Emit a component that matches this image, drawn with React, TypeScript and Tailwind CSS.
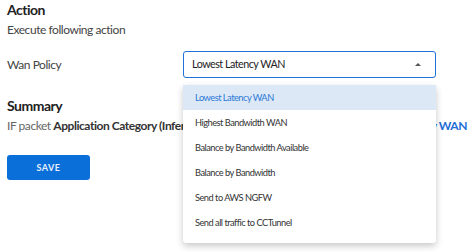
const options = [
  'Lowest Latency WAN',
  'Highest Bandwidth WAN',
  'Balance by Bandwidth Available',
  'Balance by Bandwidth',
  'Send to AWS NGFW',
  'Send all traffic to CCTunnel',
];

export default function App() {
  const selected = options[0];

  return (
    <div className="w-[474px] h-[252px] overflow-hidden bg-white text-[#444] font-['Lato',sans-serif] px-[7px]">
      {/* Action */}
      <h2 className="text-[14px] font-bold text-[#222] leading-[20px] tracking-[-0.5px]">Action</h2>
      <p className="text-[12px] leading-[18px] mt-[1px] tracking-[-0.45px]">Execute following action</p>

      <div className="flex items-center mt-[12px] h-[27px]">
        <span className="w-[176px] text-[12px] tracking-[-0.45px]">Wan Policy</span>
        <div className="relative w-[253px]">
          <div className="flex items-center justify-between h-[27px] border border-[#1f73d8] rounded-[3px] pl-[8px] pr-[14px]">
            <span className="text-[10.75px] tracking-[-0.5px] text-[#222]">{selected}</span>
            <svg width="6" height="3" viewBox="0 0 6 3" className="fill-[#555]">
              <path d="M0 3 L3 0 L6 3 Z" />
            </svg>
          </div>

          {/* Menu */}
          <ul className="absolute left-0 top-[34px] z-10 w-[253px] pb-[8px] bg-white rounded-[3px] shadow-[0_3px_7px_rgba(0,0,0,0.22)] text-[9.25px] tracking-[-0.5px]">
            {options.map((opt) => (
              <li
                key={opt}
                className={`h-[25px] flex items-center px-[12px] ${
                  opt === selected ? 'bg-[#dde8f7] text-[#2a78d6]' : 'text-[#333]'
                }`}
              >
                {opt}
              </li>
            ))}
          </ul>
        </div>
      </div>

      {/* Summary */}
      <h2 className="text-[14px] font-bold text-[#222] leading-[20px] mt-[18px] tracking-[-0.5px]">Summary</h2>
      <p className="flex whitespace-nowrap text-[12px] leading-[18px] mt-[1px] tracking-[-0.45px] text-[#666]">
        <span>
          IF packet <span className="font-bold text-[#333]">Application Category (Inferred)</span> is{' '}
          <span className="font-bold text-[#333]">Video</span>
        </span>
        <span className="ml-auto">
          THEN <span className="font-bold text-[#1f6fd6]">Lowest Latency WAN</span>
        </span>
      </p>

      <button className="block mt-[20px] w-[83px] h-[25px] rounded-[3px] bg-[#0b6fda] text-[#e6f0fb] text-[9px] font-bold tracking-[0.06em]">
        SAVE
      </button>
    </div>
  );
}
